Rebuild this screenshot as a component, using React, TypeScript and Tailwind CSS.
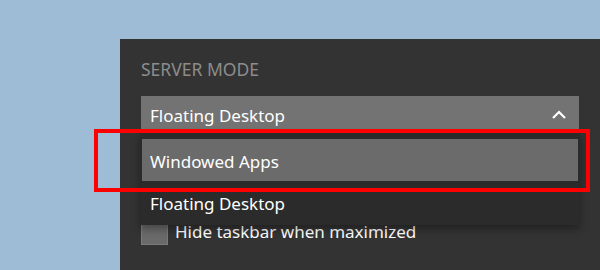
import React from "react";

const font = { fontFamily: '"Noto Sans", "Open Sans", sans-serif' };

const App: React.FC = () => {
  return (
    <div
      className="relative w-[600px] h-[270px] overflow-hidden bg-[#9fbcd6] pt-[39px] pl-[120px]"
      style={font}
    >
      {/* settings panel */}
      <div className="h-full bg-[#333333] pl-[21px] pr-[21px] pt-[18px]">
        <div className="text-[17.5px] leading-[24px] text-[#8c8c8c]">SERVER MODE</div>

        {/* combo box */}
        <div className="relative mt-[15px]">
          <div className="flex h-[38px] items-center justify-between bg-[#737373] pl-[9px] pr-[12px] pt-[1px]">
            <span className="text-[17px] text-white">Floating Desktop</span>
            <svg width="16" height="10" viewBox="0 0 16 10" className="mt-[-2px]">
              <path d="M2 8 L8 2 L14 8" fill="none" stroke="#ffffff" strokeWidth="2.2" />
            </svg>
          </div>

          {/* open list */}
          <div className="absolute left-[-1px] right-[-1px] top-[37px] z-10 bg-[#2b2b2b] pt-[6px] pb-[2px] shadow-[0_4px_8px_rgba(0,0,0,0.35)]">
            <div className="mx-[2px] flex h-[42px] items-center bg-[#6b6b6b] pl-[8px] pt-[3px] text-[17px] text-white">
              Windowed Apps
            </div>
            <div className="flex h-[42px] items-center pl-[10px] pt-[3px] text-[17px] text-white">Floating Desktop</div>
          </div>
        </div>

        {/* checkbox row */}
        <div className="mt-[84px] flex items-center gap-[7px]">
          <div className="h-[27px] w-[27px] border border-[#7a7a7a] bg-[#6a6a6a]" />
          <span className="pt-[1px] text-[17px] text-white">Hide taskbar when maximized</span>
        </div>
      </div>

      {/* annotation */}
      <div className="absolute left-[94px] top-[129px] z-20 h-[63px] w-[496px] border-4 border-[#ff0000]" />
    </div>
  );
};

export default App;
